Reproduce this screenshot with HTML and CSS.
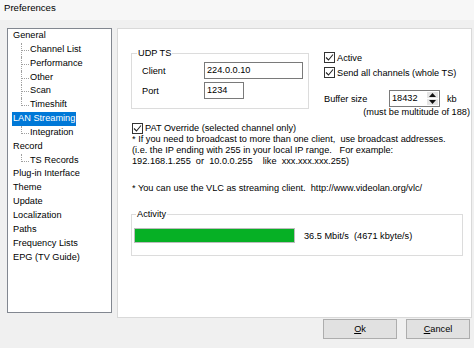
FILE: index.html
```html
<!DOCTYPE html>
<html>
<head>
<meta charset="utf-8">
<link rel="stylesheet" href="styles.css">
</head>
<body>
<div class="titlebar">Preferences</div>
<div class="main">
  <ul class="tree">
    <li><span class="lbl">General</span>
      <ul class="sub">
        <li><span class="lbl">Channel List</span></li>
        <li><span class="lbl">Performance</span></li>
        <li><span class="lbl">Other</span></li>
        <li><span class="lbl">Scan</span></li>
        <li><span class="lbl">Timeshift</span></li>
      </ul>
    </li>
    <li><span class="lbl sel">LAN Streaming</span>
      <ul class="sub">
        <li><span class="lbl">Integration</span></li>
      </ul>
    </li>
    <li><span class="lbl">Record</span>
      <ul class="sub">
        <li><span class="lbl">TS Records</span></li>
      </ul>
    </li>
    <li><span class="lbl">Plug-in Interface</span></li>
    <li><span class="lbl">Theme</span></li>
    <li><span class="lbl">Update</span></li>
    <li><span class="lbl">Localization</span></li>
    <li><span class="lbl">Paths</span></li>
    <li><span class="lbl">Frequency Lists</span></li>
    <li><span class="lbl">EPG (TV Guide)</span></li>
  </ul>
  <div class="panel">
    <div class="toprow">
      <fieldset class="group udp">
        <legend>UDP TS</legend>
        <div class="field"><span class="flabel">Client</span><span class="textbox client">224.0.0.10</span></div>
        <div class="field"><span class="flabel">Port</span><span class="textbox port">1234</span></div>
      </fieldset>
      <div class="rightcol">
        <div class="check"><span class="box"><svg width="9" height="9" viewBox="0 0 9 9"><path d="M1 4.5 L3.5 7 L8 1.5" fill="none" stroke="#222" stroke-width="1.1"/></svg></span>Active</div>
        <div class="check"><span class="box"><svg width="9" height="9" viewBox="0 0 9 9"><path d="M1 4.5 L3.5 7 L8 1.5" fill="none" stroke="#222" stroke-width="1.1"/></svg></span>Send all channels (whole TS)</div>
        <div class="buffer">
          <span class="blabel">Buffer size</span>
          <span class="spin"><span class="spinval">18432</span><span class="spinbtns"><span class="sb"><svg width="7" height="4" viewBox="0 0 7 4"><path d="M0 4 L3.5 0 L7 4Z" fill="#111"/></svg></span><span class="sb"><svg width="7" height="4" viewBox="0 0 7 4"><path d="M0 0 L3.5 4 L7 0Z" fill="#111"/></svg></span></span></span>
          <span class="kb">kb</span>
        </div>
        <div class="hint">(must be multitude of 188)</div>
      </div>
    </div>
    <div class="check pat"><span class="box"><svg width="9" height="9" viewBox="0 0 9 9"><path d="M1 4.5 L3.5 7 L8 1.5" fill="none" stroke="#222" stroke-width="1.1"/></svg></span>PAT Override (selected channel only)</div>
    <div class="notes">* If you need to broadcast to more than one client,&nbsp; use broadcast addresses.
(i.e. the IP ending with 255 in your local IP range.&nbsp;&nbsp; For example:
192.168.1.255&nbsp; or&nbsp; 10.0.0.255&nbsp;&nbsp;&nbsp; like&nbsp; xxx.xxx.xxx.255)</div>
    <div class="notes vlc">* You can use the VLC as streaming client.&nbsp; http://www.videolan.org/vlc/</div>
    <fieldset class="group activity">
      <legend>Activity</legend>
      <div class="actrow">
        <div class="progress"><div class="fill" style="width:100%"></div></div>
        <span class="rate">36.5 Mbit/s&nbsp; (4671 kbyte/s)</span>
      </div>
    </fieldset>
  </div>
</div>
<div class="buttons">
  <button class="btn ok"><u>O</u>k</button>
  <button class="btn cancel"><u>C</u>ancel</button>
</div>
</body>
</html>
```
FILE: styles.css
```css
* { box-sizing: border-box; }
html, body {
  margin: 0;
  padding: 0;
}
body {
  width: 474px;
  height: 348px;
  overflow: hidden;
  background: #f0f0f0;
  font-family: "Liberation Sans", Arial, sans-serif;
  font-size: 9.2px;
  color: #000;
}
.titlebar {
  height: 20px;
  line-height: 16px;
  padding-left: 4px;
  font-size: 9.6px;
  background: #f7f7f7;
}
.main {
  display: flex;
  align-items: flex-start;
  gap: 5px;
  margin-top: 8px;
  padding-left: 7px;
  height: 290px;
}
.tree {
  list-style: none;
  margin: 0;
  padding: 0 0 0 4px;
  width: 105px;
  height: 285px;
  border: 1px solid #828790;
  background: #fff;
  flex: none;
}
.tree li {
  line-height: 13.85px;
}
.tree .lbl {
  display: inline-block;
  padding: 0 1px;
  white-space: nowrap;
}
.tree .lbl.sel {
  background: #0078d7;
  color: #fff;
}
.sub {
  list-style: none;
  margin: 0;
  padding: 0;
}
.sub li {
  position: relative;
  padding-left: 17px;
}
.sub li::before {
  content: "";
  position: absolute;
  left: 9px;
  top: 0;
  width: 7px;
  height: 7px;
  border-left: 1px dotted #a0a0a0;
  border-bottom: 1px dotted #a0a0a0;
}
.sub li:not(:last-child)::after {
  content: "";
  position: absolute;
  left: 9px;
  top: 7px;
  height: 7px;
  border-left: 1px dotted #a0a0a0;
}
.panel {
  width: 355px;
  height: 290px;
  border: 1px solid #d9d9d9;
  background: #fff;
  padding: 18px 1px 0 13px;
  flex: none;
}
.toprow {
  display: flex;
  align-items: flex-start;
}
.group {
  margin: 0;
  padding: 0;
  border: 1px solid #dcdcdc;
  min-width: 0;
}
.group legend {
  padding: 0 1px;
  line-height: 12px;
}
.udp {
  width: 178px;
  height: 62px;
  padding: 3px 0 0 10px;
  flex: none;
}
.udp legend { margin-left: -5px; }
.field {
  display: flex;
  align-items: center;
  height: 17px;
  margin-bottom: 3px;
}
.flabel {
  width: 62px;
}
.textbox {
  display: block;
  height: 17px;
  line-height: 15px;
  border: 1px solid #7a7a7a;
  padding-left: 2px;
  background: #fff;
}
.client { width: 99px; }
.port { width: 40px; }
.rightcol {
  flex: 1;
  margin-left: 15px;
  padding-top: 3px;
}
.check {
  display: flex;
  align-items: center;
  height: 15px;
  white-space: nowrap;
}
.box {
  width: 11px;
  height: 11px;
  border: 1px solid #333;
  background: #fff;
  margin-right: 2px;
  display: flex;
  align-items: center;
  justify-content: center;
  flex: none;
}
.box svg { display: block; }
.buffer {
  display: flex;
  align-items: center;
  height: 17px;
  margin-top: 10px;
}
.blabel { width: 65px; }
.spin {
  display: flex;
  width: 51px;
  height: 17px;
  border: 1px solid #7a7a7a;
  background: #fff;
}
.spinval {
  flex: 1;
  padding-left: 2px;
  line-height: 15px;
}
.spinbtns {
  display: flex;
  flex-direction: column;
  gap: 1px;
  width: 12px;
  padding: 1px 1px 1px 0;
}
.sb {
  flex: 1;
  background: #e5e5e5;
  display: flex;
  align-items: center;
  justify-content: center;
}
.sb svg { display: block; }
.kb { margin-left: 7px; }
.hint {
  text-align: right;
  line-height: 11px;
}
.pat {
  margin-top: 4px;
  height: 12px;
  padding-left: 1px;
}
.notes {
  white-space: pre;
  line-height: 11px;
  padding-left: 1px;
}
.vlc {
  margin-top: 16px;
}
.activity {
  width: 332px;
  height: 48px;
  margin-top: 14px;
  padding: 8px 0 0 2px;
}
.activity legend { margin-left: 2px; }
.actrow {
  display: flex;
  align-items: center;
}
.progress {
  width: 161px;
  height: 15px;
  border: 1px solid #bcbcbc;
  background: #e6e6e6;
}
.fill {
  height: 100%;
  background: #06b025;
}
.rate {
  margin-left: 9px;
}
.buttons {
  display: flex;
  justify-content: flex-end;
  gap: 9px;
  margin-top: 1px;
  padding-right: 4px;
}
.btn {
  height: 20px;
  border: 1px solid #adadad;
  background: #e1e1e1;
  font-family: inherit;
  font-size: 9.2px;
  color: #000;
  padding: 0;
}
.ok { width: 74px; }
.cancel { width: 64px; }
```
